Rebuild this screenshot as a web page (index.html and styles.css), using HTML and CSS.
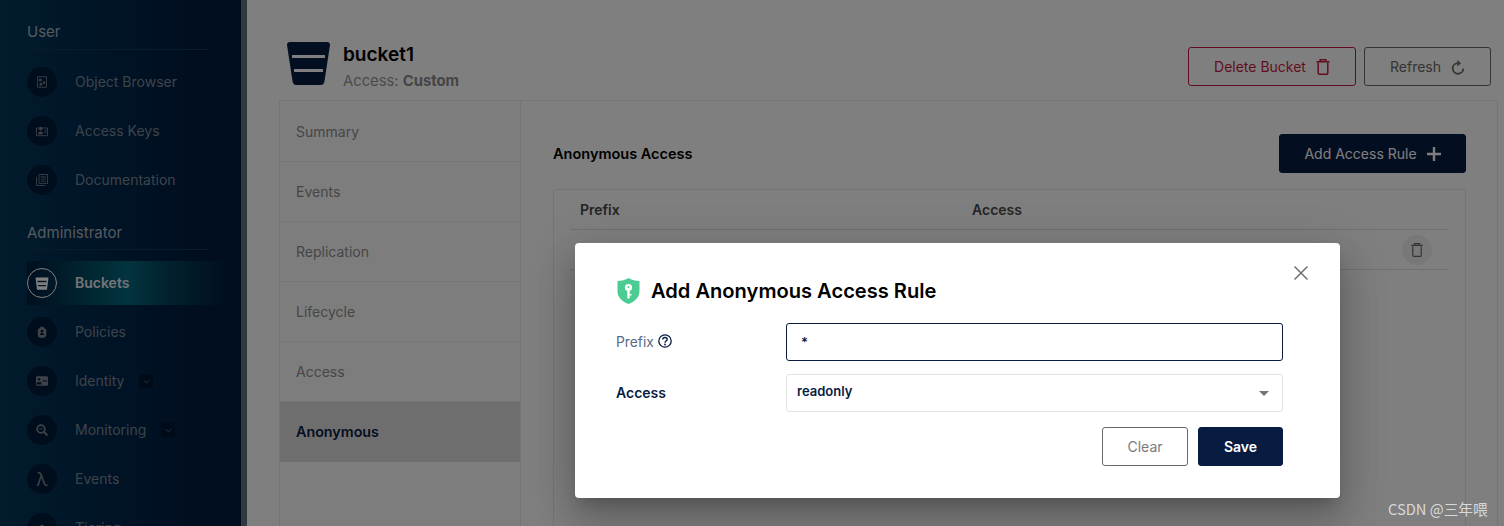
FILE: index.html
```html
<!DOCTYPE html>
<html lang="en">
<head>
<meta charset="utf-8">
<title>bucket1 - Anonymous Access</title>
<link rel="stylesheet" href="styles.css">
</head>
<body>
<div class="app">
  <aside class="sidebar">
    <div class="group-title">User</div>
    <ul class="menu">
      <li class="item"><span class="ic"><svg viewBox="0 0 12 14" class="gl"><path fill="none" stroke="currentColor" d="M.7.7h10.600v12.600H.7z"/><path fill="currentColor" d="M2.500 3h3v3h-3zM7 6.500h2.600v2.600H7zM3 9.500l1.600-1.800 1.600 1.800v1.600H3z"/></svg></span><span class="lbl">Object Browser</span></li>
      <li class="item"><span class="ic"><svg viewBox="0 0 14 12" class="gl wide"><path fill="none" stroke="currentColor" d="M.6 2.500h12.800v9H.6z"/><circle cx="5.500" cy="3.400" r="2" fill="currentColor"/><path fill="currentColor" d="M2.500 9.800c0-2.200 1.400-3.300 3-3.300s3 1.100 3 3.300zM9.800 4.800h2.400v1H9.800zM9.800 7h2.400v1H9.800z"/></svg></span><span class="lbl">Access Keys</span></li>
      <li class="item"><span class="ic"><svg viewBox="0 0 14 14" class="gl wide"><path fill="none" stroke="currentColor" d="M3.500.6h9.900v10.400H3.500z"/><path fill="none" stroke="currentColor" d="M.6 3.400v10h10"/><path fill="currentColor" d="M5.500 3h6v1h-6zM5.500 5.400h6v1h-6zM5.500 7.800h6v1h-6z"/></svg></span><span class="lbl">Documentation</span></li>
    </ul>
    <div class="group-title admin">Administrator</div>
    <ul class="menu">
      <li class="item active"><span class="ic"><svg viewBox="0 0 16 14" class="gl wide"><path fill="currentColor" d="M.6 0h14.800l-1.700 14H2.300zM2.800 3.800v1.800h10.400V3.800zM3.400 8.600v1.600h9.200V8.600z"/></svg></span><span class="lbl">Buckets</span></li>
      <li class="item"><span class="ic"><svg viewBox="0 0 10 14" class="gl"><path fill="currentColor" d="M3 2.200V1h4v1.200c1.800.4 3 1.500 3 3.300v4.700C10 12.600 7.800 14 5 14s-5-1.400-5-3.800V5.500c0-1.800 1.200-2.900 3-3.300z"/><circle cx="5" cy="6" r="1.500" fill="#00152c"/><path fill="#00152c" d="M2.500 10.500c0-1.500 1.200-2.400 2.500-2.400s2.500.9 2.500 2.400z"/></svg></span><span class="lbl">Policies</span></li>
      <li class="item"><span class="ic"><svg viewBox="0 0 14 11" class="gl wide"><rect width="14" height="11" rx="1.500" fill="currentColor"/><path fill="#00152c" d="M7.600 5h5.400v1H7.600zM1 7h5.200v2.500H1z"/><circle cx="3.600" cy="3.600" r="1.400" fill="#00152c"/></svg></span><span class="lbl">Identity</span><span class="chev"><svg viewBox="0 0 10 6"><path fill="none" stroke="currentColor" d="M1 1l4 4 4-4"/></svg></span></li>
      <li class="item"><span class="ic"><svg viewBox="0 0 14 14" class="gl wide"><circle cx="5.800" cy="5.800" r="4.500" fill="none" stroke="currentColor" stroke-width="2"/><path stroke="currentColor" stroke-width="2.200" d="M9 9l4.300 4.300"/><path fill="none" stroke="currentColor" d="M3.500 6.500l1.500-1.500 1 1.500 1.500-2"/></svg></span><span class="lbl">Monitoring</span><span class="chev"><svg viewBox="0 0 10 6"><path fill="none" stroke="currentColor" d="M1 1l4 4 4-4"/></svg></span></li>
      <li class="item"><span class="ic lambda">λ</span><span class="lbl">Events</span></li>
      <li class="item"><span class="ic"><svg viewBox="0 0 14 8" class="gl wide"><path fill="currentColor" d="M7 0l7 4-7 4-7-4z"/></svg></span><span class="lbl">Tiering</span></li>
    </ul>
  </aside>

  <main class="main">
    <header class="head">
      <div class="bucket">
        <svg class="bucket-ic" viewBox="0 0 43 43"><path fill="#081c42" d="M3 0h37c2 0 3 1 3 3l-5.500 36c-.3 2.500-1.500 4-4 4h-24c-2.500 0-3.700-1.500-4-4L0 3c0-2 1-3 3-3z"/><path fill="#fff" d="M5 13h33v3H5zM7 27h29v3H7z"/></svg>
        <div>
          <div class="bucket-name">bucket1</div>
          <div class="bucket-access">Access: <b>Custom</b></div>
        </div>
      </div>
      <div class="head-actions">
        <button class="btn danger">Delete Bucket<svg viewBox="0 0 12 14" class="btn-ic"><path fill="none" stroke="currentColor" stroke-width="1.300" d="M1.800 3.200v9.100c0 .6.400 1 1 1h6.400c.6 0 1-.4 1-1V3.200M.3 2.400h11.400M3.500 2.200V.7h5v1.500"/></svg></button>
        <button class="btn neutral">Refresh<svg viewBox="0 0 14 16" class="btn-ic"><path fill="none" stroke="currentColor" stroke-width="1.800" d="M12.300 9.500A5.300 5.300 0 1 1 6.500 4.200"/><path fill="currentColor" d="M6.300 1v6.500l3.700-3.200z"/></svg></button>
      </div>
    </header>

    <section class="panel">
      <nav class="tabs">
        <div class="tab">Summary</div>
        <div class="tab">Events</div>
        <div class="tab">Replication</div>
        <div class="tab">Lifecycle</div>
        <div class="tab">Access</div>
        <div class="tab selected">Anonymous</div>
      </nav>
      <div class="content">
        <div class="content-head">
          <h2 class="content-title">Anonymous Access</h2>
          <button class="btn primary add">Add Access Rule<svg viewBox="0 0 14 14" class="btn-ic plus"><path fill="none" stroke="currentColor" stroke-width="2.400" d="M7 0v14M0 7h14"/></svg></button>
        </div>
        <div class="table">
          <div class="tr th"><span class="col-prefix">Prefix</span><span>Access</span></div>
          <div class="tr row"><span class="del"><svg viewBox="0 0 12 14"><path fill="none" stroke="currentColor" stroke-width="1.200" d="M1.800 3.200v9.100c0 .6.400 1 1 1h6.400c.6 0 1-.4 1-1V3.200M.3 2.400h11.400M3.500 2.200V.7h5v1.500"/></svg></span></div>
        </div>
      </div>
    </section>
  </main>
</div>

<div class="overlay"></div>

<div class="modal">
  <button class="close" aria-label="Close"><svg viewBox="0 0 14 14"><path fill="none" stroke="currentColor" stroke-width="1.500" d="M.5.500l13 13M13.500.500l-13 13"/></svg></button>
  <div class="modal-title">
    <svg class="shield" viewBox="0 0 22 26"><path fill="#4ccb92" d="M11 0c3 2 7 3 11 3v10c0 6-4 10.500-11 13C4 23.500 0 19 0 13V3c4 0 8-1 11-3z"/><circle cx="11" cy="9.500" r="3.600" fill="#fff"/><path fill="#fff" d="M9.800 11h2.400v9.500H9.800z"/><path fill="#fff" d="M12 16h2v1.500h-2z"/><circle cx="11" cy="9" r="1" fill="#4ccb92"/></svg>
    <span class="modal-title-text">Add Anonymous Access Rule</span>
  </div>
  <div class="field">
    <label class="field-label">Prefix<svg class="help" viewBox="0 0 14 14"><circle cx="7" cy="7" r="6.200" fill="none" stroke="currentColor" stroke-width="1.300"/><path fill="none" stroke="currentColor" stroke-width="1.400" d="M4.800 5.500C4.800 4.200 5.900 3.500 7 3.500s2.200.7 2.200 2c0 1.600-2.200 1.500-2.200 3.200"/><circle cx="7" cy="10.500" r=".9" fill="currentColor"/></svg></label>
    <div class="input">*</div>
  </div>
  <div class="field second">
    <label class="field-label strong">Access</label>
    <div class="select">readonly<span class="caret"></span></div>
  </div>
  <div class="modal-actions">
    <button class="btn clear">Clear</button>
    <button class="btn primary save">Save</button>
  </div>
</div>

<div class="watermark">CSDN @三年喂</div>
</body>
</html>
```

FILE: styles.css
```css
* { box-sizing: border-box; }
html, body { margin: 0; height: 526px; overflow: hidden; }
body { font-family: Inter, "Liberation Sans", sans-serif; color: #000; background: #fff; position: relative; }
ul { list-style: none; margin: 0; padding: 0; }
button { font-family: inherit; cursor: pointer; }

.app { display: flex; height: 526px; overflow: hidden; }

.sidebar {
  width: 247px; flex: none; padding: 15px 0 0 27px; overflow: hidden;
  background: linear-gradient(90deg, #05395a 0, #002a50 90px, #001c3f 200px, #001c3f 100%);
  border-right: 6px solid #666f80;
  color: #fff;
}
.group-title { width: 181px; height: 35px; font-size: 15px; line-height: 34px; color: #aeb4bc; border-bottom: 1px solid #12365c; margin-bottom: 10px; }
.group-title.admin { height: 32px; line-height: 30px; margin-bottom: 11px; }
.menu { display: flex; flex-direction: column; gap: 5px; margin-bottom: 16px; }
.item { height: 44px; display: flex; align-items: center; font-size: 14px; color: #7d8792; width: 203px; }
.lbl { padding-bottom: 2px; }
.ic { width: 30px; height: 30px; border-radius: 50%; background: #001a38; display: flex; align-items: center; justify-content: center; margin-right: 18px; flex: none; color: #7d8792; }
.gl { width: 10px; height: 12px; display: block; }
.gl.wide { width: 12px; height: 12px; }
.lambda { font-size: 18px; font-family: Inter, sans-serif; }
.chev { width: 14px; height: 14px; margin-left: 15px; background: #001733; color: #7d8792; display: flex; align-items: center; justify-content: center; }
.chev svg { width: 7px; height: 5px; display: block; }
.item.active { color: #e6e9ec; font-weight: 600; background: linear-gradient(90deg, #011f3e 0, #04687e 50%, #05455f 68%, #011c3c 100%); }
.item.active .ic { background: transparent; border: 1px solid #fff; color: #fff; }
.item.active .gl { width: 14px; height: 13px; }

.main { flex: 1; min-width: 0; padding: 0 6px 0 32px; display: flex; flex-direction: column; }
.head { height: 100px; padding: 42px 7px 0 8px; display: flex; justify-content: space-between; align-items: flex-start; flex: none; }
.bucket { display: flex; gap: 13px; }
.bucket-ic { width: 43px; height: 43px; display: block; }
.bucket-name { font-size: 19px; font-weight: 600; line-height: 25px; color: #000; }
.bucket-access { font-size: 14.800px; line-height: 20px; margin-top: 4px; color: #969696; }
.bucket-access b { color: #8a8a8a; font-weight: 700; }
.head-actions { display: flex; gap: 8px; margin-top: 5px; }

.btn { height: 39px; border-radius: 3px; font-size: 14px; display: flex; align-items: center; justify-content: center; background: #fff; padding: 0; border: 1px solid #696969; }
.btn-ic { width: 14px; height: 16px; margin-left: 10px; display: block; }
.danger { width: 168px; color: #c51b3f; border-color: #c51b3f; }
.neutral { width: 127px; color: #696969; }
.primary { background: #081c42; border-color: #081c42; color: #fff; }
.add { width: 187px; }
.plus { width: 14px; height: 14px; }

.panel { flex: 1; display: flex; border: 1px solid #eaeaea; border-bottom: 0; min-height: 0; }
.tabs { width: 241px; flex: none; border-right: 1px solid #eaeaea; background: #fafafa; padding-top: 1px; }
.tab { height: 60px; display: flex; align-items: center; padding-left: 16px; font-size: 14px; color: #8d8d8d; border-bottom: 1px solid #eaeaea; }
.tab.selected { background: #dcdcdc; color: #081c42; font-weight: 600; font-size: 14.300px; border-bottom-color: #dcdcdc; }

.content { flex: 1; min-width: 0; padding: 33px 31px 0 32px; }
.content-head { display: flex; justify-content: space-between; align-items: center; height: 39px; margin-bottom: 16px; }
.content-title { margin: 0; font-size: 14.500px; font-weight: 600; color: #000; }
.table { height: 400px; border: 1px solid #eaeaea; border-radius: 3px; padding: 0 17px 0 16px; }
.tr { display: flex; border-bottom: 1px solid #e0e0e0; }
.th { height: 40px; align-items: center; padding: 0 0 1px 10px; font-size: 14px; font-weight: 600; color: #4a4a4a; }
.col-prefix { width: 392px; }
.row { height: 40px; align-items: center; justify-content: flex-end; padding-right: 16px; }
.del { width: 30px; height: 30px; border-radius: 50%; background: #f0f0f0; color: #6a6a6a; display: flex; align-items: center; justify-content: center; }
.del svg { width: 12px; height: 14px; display: block; }

.overlay { position: absolute; inset: 0; background: rgba(0, 0, 0, .5); }

.modal {
  position: absolute; left: 575px; top: 243px; width: 765px; height: 255px;
  background: #fff; border-radius: 4px; padding: 35px 57px 0 41px;
  box-shadow: 0 11px 15px -7px rgba(0,0,0,.2), 0 24px 38px 3px rgba(0,0,0,.14), 0 9px 46px 8px rgba(0,0,0,.12);
}
.close { position: absolute; right: 32px; top: 23px; width: 14px; height: 14px; padding: 0; border: 0; background: none; color: #707070; }
.close svg { width: 14px; height: 14px; display: block; }
.modal-title { display: flex; align-items: center; gap: 11px; height: 26px; font-size: 20.100px; font-weight: 600; color: #000; }
.modal-title-text { padding-bottom: 1px; }
.shield { width: 23px; height: 26px; display: block; margin-left: 1px; flex: none; }
.field { display: flex; align-items: center; margin-top: 19px; height: 38px; }
.field.second { margin-top: 13px; }
.field-label { width: 170px; flex: none; font-size: 13.800px; color: #5a6a88; display: flex; align-items: center; }
.field-label.strong { color: #081c42; font-weight: 600; font-size: 14px; padding-bottom: 2px; }
.help { width: 14px; height: 14px; margin-left: 4px; margin-top: -2px; color: #081c42; }
.input { flex: 1; height: 38px; border: 1px solid #081c42; border-radius: 3px; padding-left: 14px; font-size: 13px; font-weight: 600; color: #081c42; line-height: 37px; }
.select { flex: 1; height: 38px; border: 1px solid #e3e3e3; border-radius: 3px; padding: 0 13px 5px 10px; font-size: 13px; font-weight: 600; color: #081c42; display: flex; align-items: center; justify-content: space-between; }
.caret { width: 0; height: 0; border-left: 5px solid transparent; border-right: 5px solid transparent; border-top: 5px solid #757575; margin-top: 5px; }
.modal-actions { display: flex; justify-content: flex-end; gap: 10px; margin-top: 15px; }
.clear { width: 86px; color: #7a7a7a; }
.save { width: 85px; font-weight: 600; }

.watermark { position: absolute; left: 1388px; top: 499px; font-family: "Noto Sans CJK SC", "Liberation Sans", sans-serif; font-size: 14.700px; line-height: 20px; color: #d8d8d8; white-space: nowrap; }
```
